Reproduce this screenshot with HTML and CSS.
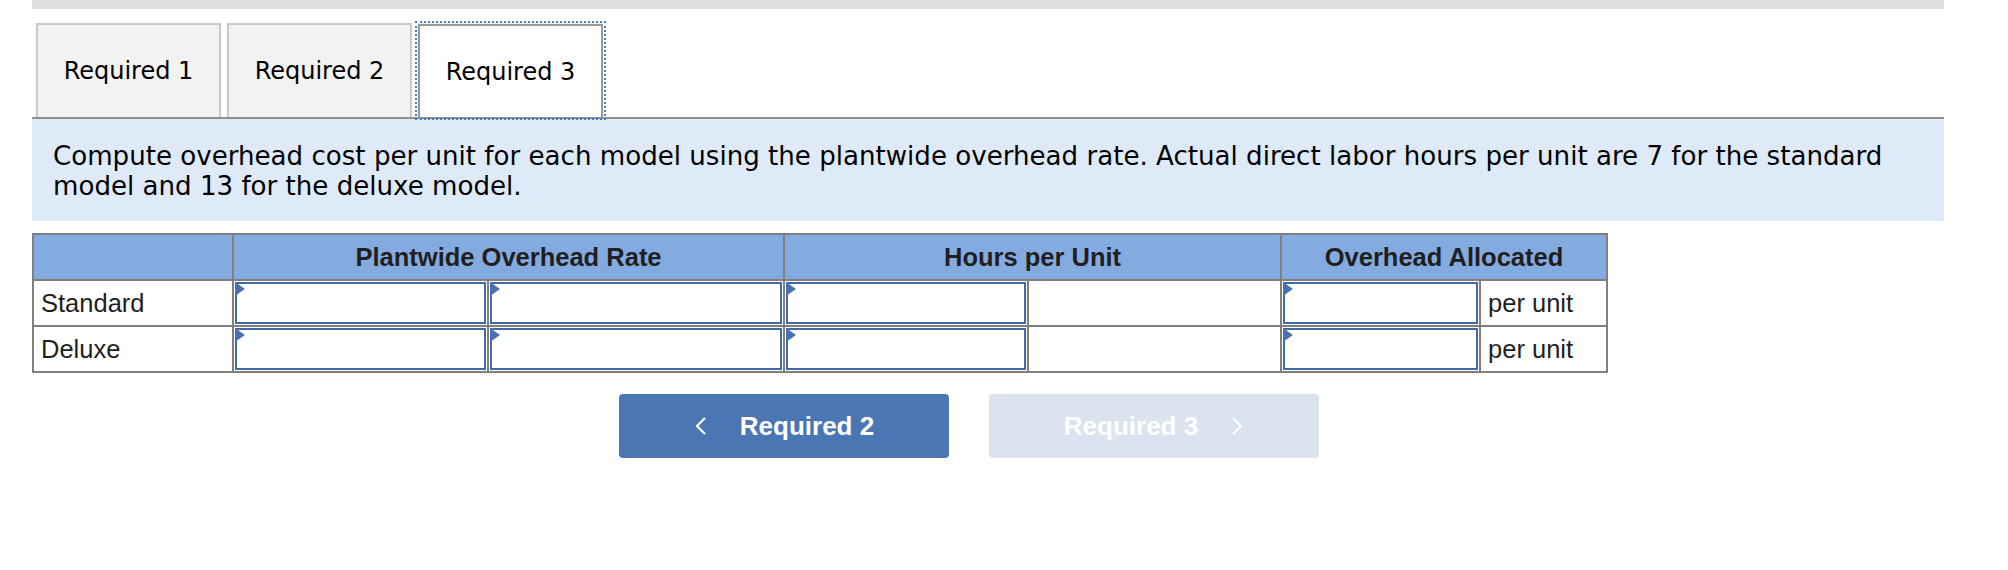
FILE: index.html
```html
<!DOCTYPE html>
<html lang="en">
<head>
  <meta charset="UTF-8">
  <meta name="viewport" content="width=device-width, initial-scale=1.0">
  <title>Required 3</title>
  <link rel="stylesheet" href="styles.css">
</head>
<body>
  <div class="container">
    <div class="topbar"></div>

    <div class="tabs">
      <div class="tab">Required 1</div>
      <div class="tab">Required 2</div>
      <div class="tab active">Required 3</div>
    </div>

    <div class="prompt">
      Compute overhead cost per unit for each model using the plantwide overhead rate. Actual direct labor hours per unit are 7 for the standard model and 13 for the deluxe model.
    </div>

    <table class="grid">
      <colgroup>
        <col style="width: 200px">
        <col style="width: 255px">
        <col style="width: 296px">
        <col style="width: 244px">
        <col style="width: 253px">
        <col style="width: 199px">
        <col style="width: 127px">
      </colgroup>
      <tr class="head">
        <th></th>
        <th colspan="2">Plantwide Overhead Rate</th>
        <th colspan="2">Hours per Unit</th>
        <th colspan="2">Overhead Allocated</th>
      </tr>
      <tr>
        <td class="label">Standard</td>
        <td class="entry"><div class="field"><input type="text"></div></td>
        <td class="entry"><div class="field"><input type="text"></div></td>
        <td class="entry"><div class="field"><input type="text"></div></td>
        <td></td>
        <td class="entry"><div class="field"><input type="text"></div></td>
        <td class="label">per unit</td>
      </tr>
      <tr>
        <td class="label">Deluxe</td>
        <td class="entry"><div class="field"><input type="text"></div></td>
        <td class="entry"><div class="field"><input type="text"></div></td>
        <td class="entry"><div class="field"><input type="text"></div></td>
        <td></td>
        <td class="entry"><div class="field"><input type="text"></div></td>
        <td class="label">per unit</td>
      </tr>
    </table>

    <div class="nav">
      <button class="nav-btn prev">
        <svg width="14" height="20" viewBox="0 0 14 20"><polyline points="11,2 3,10 11,18" fill="none" stroke="#fff" stroke-width="2.2"/></svg>
        <span>Required 2</span>
      </button>
      <button class="nav-btn next" disabled>
        <span>Required 3</span>
        <svg width="14" height="20" viewBox="0 0 14 20"><polyline points="3,2 11,10 3,18" fill="none" stroke="#fff" stroke-width="2.2"/></svg>
      </button>
    </div>
  </div>
</body>
</html>
```

FILE: styles.css
```css
body {
  margin: 0;
  padding: 0;
  background-color: white;
  font-family: "DejaVu Sans", Verdana, sans-serif;
  color: #000;
}

.container {
  width: 1912px;
  margin-left: 32px;
}

.topbar {
  height: 9px;
  background-color: #e0e0e0;
}

.tabs {
  display: flex;
  gap: 6px;
  padding-left: 4px;
  margin-top: 14px;
  border-bottom: 2px solid #8f8f8f;
}

.tab {
  width: 181px;
  height: 92px;
  display: flex;
  align-items: center;
  justify-content: center;
  background-color: #f2f2f2;
  border: 2px solid #c8c8c8;
  border-bottom: none;
  font-size: 24px;
}

.tab.active {
  background-color: white;
  border-color: #999;
  height: 91px;
  margin-top: 1px;
  outline: 2px dotted #4a7cc7;
  outline-offset: 1px;
}

.prompt {
  background-color: #deeaf7;
  padding: 22px 21px 20px 21px;
  font-size: 26.1px;
  line-height: 30px;
}

.grid {
  margin-top: 12px;
  border-collapse: collapse;
  table-layout: fixed;
  width: 1574px;
  font-family: "Liberation Sans", Arial, sans-serif;
  font-size: 25.5px;
  color: #1f1f1f;
}

.grid th,
.grid td {
  border: 2px solid #7f7f7f;
  padding: 0;
}

.grid .head {
  height: 46px;
}

.grid th {
  background-color: #84abdf;
  font-weight: bold;
  text-align: center;
}

.grid td {
  height: 42px;
}

.grid td.label {
  padding-left: 7px;
}

.grid td.entry {
  padding: 1px;
}

.field {
  position: relative;
  height: 42px;
}

.field::before {
  content: "";
  position: absolute;
  left: 0;
  top: 0;
  border-top: 7px solid transparent;
  border-bottom: 7px solid transparent;
  border-left: 10px solid #4a72b0;
}

.field input {
  width: 100%;
  height: 100%;
  box-sizing: border-box;
  border: 2px solid #426aa9;
  margin: 0;
  padding: 0 8px;
  font-size: 24px;
  background: white;
}

.nav {
  display: flex;
  gap: 40px;
  padding-left: 587px;
  margin-top: 21px;
}

.nav-btn {
  width: 330px;
  height: 64px;
  display: flex;
  align-items: center;
  justify-content: center;
  gap: 32px;
  border: none;
  border-radius: 4px;
  color: white;
  font-family: "Liberation Sans", Arial, sans-serif;
  font-size: 26px;
  font-weight: bold;
  cursor: pointer;
}

.nav-btn.prev {
  background-color: #4a76b4;
}

.nav-btn.next {
  background-color: #dae3ef;
  cursor: default;
}
```
